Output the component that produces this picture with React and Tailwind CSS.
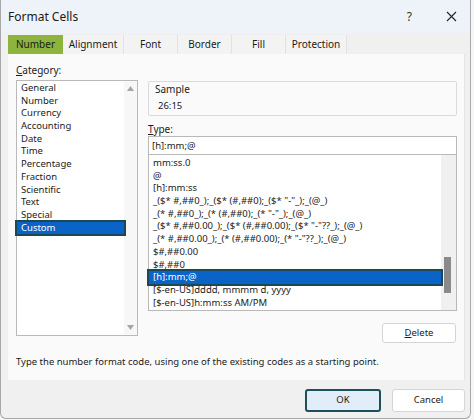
import React from 'react';

const font = { fontFamily: '"Noto Sans", "Open Sans", sans-serif' };

const categories = [
  'General', 'Number', 'Currency', 'Accounting', 'Date', 'Time',
  'Percentage', 'Fraction', 'Scientific', 'Text', 'Special', 'Custom',
];

const formats = [
  'mm:ss.0',
  '@',
  '[h]:mm:ss',
  '_($* #,##0_);_($* (#,##0);_($* "-"_);_(@_)',
  '_(* #,##0_);_(* (#,##0);_(* "-"_);_(@_)',
  '_($* #,##0.00_);_($* (#,##0.00);_($* "-"??_);_(@_)',
  '_(* #,##0.00_);_(* (#,##0.00);_(* "-"??_);_(@_)',
  '$#,##0.00',
  '$#,##0',
  '[h]:mm;@',
  '[$-en-US]dddd, mmmm d, yyyy',
  '[$-en-US]h:mm:ss AM/PM',
];

const tabs = ['Number', 'Alignment', 'Font', 'Border', 'Fill', 'Protection'];

const Row = ({ text, selected }) => (
  <div
    className={
      'h-[12.7px] leading-[12.7px] pl-[4px] whitespace-nowrap ' +
      (selected
        ? 'bg-[#0a64c8] text-white outline-2 outline-[#1b4852] relative z-10'
        : 'text-[#1b1b1b]')
    }
  >
    {text}
  </div>
);

export default function App() {
  return (
    <div className="w-[474px] h-[420px] bg-[#f6f6f6] overflow-hidden" style={font}>
      <div className="w-[471px] h-[419px] bg-[#f0f0f0] border-l border-r border-b border-[#a8a8a8] rounded-b-md text-[9.5px] text-[#1b1b1b]">
        {/* title bar */}
        <div className="h-[33px] bg-[#eef3f9] flex items-center pl-[7px] pr-[13px]">
          <span className="text-[12px] text-[#1a1a1a]">Format Cells</span>
          <span className="ml-auto text-[12px] text-[#333]">?</span>
          <svg className="ml-[34px]" width="11" height="11" viewBox="0 0 11 11">
            <path d="M1 1L10 10M10 1L1 10" stroke="#222" strokeWidth="1.1" />
          </svg>
        </div>

        {/* tabs */}
        <div className="mt-[2px] ml-[7px] flex h-[19px]">
          {tabs.map((t, i) => (
            <div
              key={t}
              className={
                'h-full flex items-center justify-center text-[10px] ' +
                (i === 0
                  ? 'w-[55px] bg-[#8db43c] text-[#1a1a1a]'
                  : 'bg-[#f3f3f3] border-r border-[#e2e2e2] ' +
                    (t === 'Alignment' || t === 'Protection' ? 'w-[61px]' : 'w-[54px]'))
              }
            >
              {t}
            </div>
          ))}
        </div>

        {/* panel */}
        <div className="ml-[7px] w-[457px] h-[326px] bg-[#fafafa] border-r border-[#e4e4e4] pl-[8px] pt-[10px]">
          <div className="flex">
            {/* left column */}
            <div className="w-[122px]">
              <div className="h-[16px] leading-[12px] text-[10px]">
                <span className="underline">C</span>ategory:
              </div>
              <div className="h-[256px] bg-white border border-[#b9b9b9] flex">
                <div className="flex-1 pt-[1px]">
                  {categories.map((c) => (
                    <Row key={c} text={c} selected={c === 'Custom'} />
                  ))}
                </div>
                <div className="w-[13px] bg-[#f7f7f7] flex flex-col items-center justify-between py-[5px]">
                  <svg width="7" height="5" viewBox="0 0 7 5">
                    <path d="M0 5L3.5 0L7 5Z" fill="#a6a6a6" />
                  </svg>
                  <svg width="7" height="5" viewBox="0 0 7 5">
                    <path d="M0 0L3.5 5L7 0Z" fill="#a6a6a6" />
                  </svg>
                </div>
              </div>
            </div>

            {/* right column */}
            <div className="ml-[10px] w-[309px] flex flex-col">
              <div className="mt-[17px] h-[35px] border border-[#dadada] rounded-[2px] pl-[6px] pt-[1px]">
                <div className="leading-[12px] text-[10px]">Sample</div>
                <div className="mt-[5px] ml-[3px] leading-[12px]">26:15</div>
              </div>
              <div className="mt-[7px] h-[13px] leading-[12px] text-[10px]">
                <span className="underline">T</span>ype:
              </div>
              <div className="h-[19px] bg-white border border-[#b9b9b9] leading-[17px] pl-[3px]">
                [h]:mm;@
              </div>
              <div className="h-[156px] bg-white border border-t-0 border-[#b9b9b9] flex">
                <div className="flex-1 pt-[2px]">
                  {formats.map((f, i) => (
                    <Row key={i} text={f} selected={i === 9} />
                  ))}
                </div>
                <div className="w-[15px] bg-[#f0f0f0] pl-[3px] pt-[102px]">
                  <div className="w-[7px] h-[36px] bg-[#8a8a8a]" />
                </div>
              </div>
              <div className="mt-[12px] self-end mr-[1px] w-[74px] h-[20px] bg-white border border-[#d5d5d5] rounded-[3px] flex items-center justify-center">
                <span className="underline">D</span>elete
              </div>
            </div>
          </div>
          <div className="mt-[13px] leading-[12px]">
            Type the number format code, using one of the existing codes as a starting point.
          </div>
        </div>

        {/* footer */}
        <div className="flex justify-end gap-[11px] pt-[9px] pr-[5px]">
          <div className="w-[76px] h-[23px] bg-[#e1eef9] border-2 border-[#1d4f5a] rounded-[3px] flex items-center justify-center">
            OK
          </div>
          <div className="w-[73px] h-[23px] bg-white border border-[#d5d5d5] rounded-[3px] flex items-center justify-center">
            Cancel
          </div>
        </div>
      </div>
    </div>
  );
}
